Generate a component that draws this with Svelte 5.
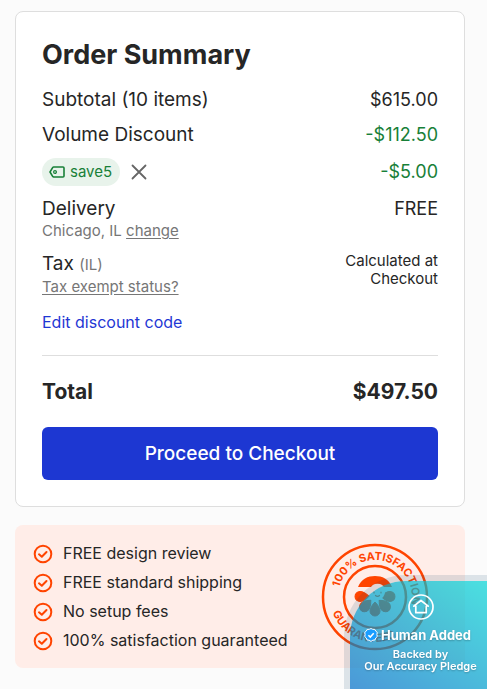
<script>
  // OrderSummary: cart totals, perks list and the floating pledge badge

  let discountCode = $state('save5');

  const perks = [
    'FREE design review',
    'FREE standard shipping',
    'No setup fees',
    '100% satisfaction guaranteed'
  ];

  // arms of the stamp's mascot, as rotation angles
  const petals = [-88, -44, 0, 44, 88];

  function removeCode() {
    discountCode = '';
  }
</script>

<main class="page">
  <section class="card">
    <h1>Order Summary</h1>

    <div class="rows">
      <div class="row">
        <span>Subtotal (10 items)</span>
        <span class="amount">$615.00</span>
      </div>
      <div class="row">
        <span>Volume Discount</span>
        <span class="amount saving">-$112.50</span>
      </div>
      {#if discountCode}
        <div class="row coupon">
          <div class="coupon-left">
            <span class="chip">
              <svg width="16" height="12" viewBox="0 0 16 12" fill="none" stroke="currentColor" stroke-width="1.6" stroke-linejoin="round">
                <path d="M4.6 1H14a1 1 0 0 1 1 1v8a1 1 0 0 1-1 1H4.6a1 1 0 0 1-.8-.4L1 6l2.8-4.6A1 1 0 0 1 4.6 1z" />
                <circle cx="6" cy="6" r="1.4" stroke-width="1.2" />
              </svg>
              {discountCode}
            </span>
            <button type="button" class="remove" aria-label="Remove discount code" onclick={removeCode}>
              <svg width="16" height="16" viewBox="0 0 16 16" fill="none" stroke="currentColor" stroke-width="1.8" stroke-linecap="round">
                <path d="M1.5 1.5l13 13M14.5 1.5l-13 13" />
              </svg>
            </button>
          </div>
          <span class="amount saving">-$5.00</span>
        </div>
      {/if}
      <div class="row">
        <div>
          <div>Delivery</div>
          <div class="note">Chicago, IL <a href="#change">change</a></div>
        </div>
        <span class="amount">FREE</span>
      </div>
      <div class="row">
        <div>
          <div>Tax <span class="region">(IL)</span></div>
          <div class="note"><a href="#exempt">Tax exempt status?</a></div>
        </div>
        <span class="pending">Calculated at Checkout</span>
      </div>
    </div>

    <a class="edit" href="#discount">Edit discount code</a>

    <div class="total">
      <span>Total</span>
      <span>$497.50</span>
    </div>

    <button type="button" class="checkout">Proceed to Checkout</button>
  </section>

  <section class="perks">
    <ul>
      {#each perks as perk}
        <li>
          <svg width="20" height="20" viewBox="0 0 20 20" fill="none" stroke="currentColor" stroke-width="2" stroke-linecap="round" stroke-linejoin="round">
            <circle cx="10" cy="10" r="8.3" />
            <path d="M6 10.3l2.8 2.5 4.7-4.8" />
          </svg>
          {perk}
        </li>
      {/each}
    </ul>

    <svg class="stamp" width="110" height="110" viewBox="-55 -55 110 110" fill="none">
      <defs>
        <path id="arc-top" d="M-37 0A37 37 0 0 1 37 0A37 37 0 0 1 -37 0" transform="rotate(15)" />
        <path id="arc-bottom" d="M-45 0A45 45 0 0 0 45 0A45 45 0 0 0 -45 0" transform="rotate(-20)" />
      </defs>
      <circle r="52" stroke="#ff4400" stroke-width="2.5" />
      <circle r="31" stroke="#ff4400" stroke-width="2.5" />
      <text><textPath href="#arc-top">100% SATISFACTION</textPath></text>
      <text><textPath href="#arc-bottom">GUARANTEED</textPath></text>
      <path d="M-17-10C-14-18-7-21 0-21S14-18 17-10z" fill="#ff4400" />
      {#each petals as angle}
        <path d="M0 6C-3 9-5 12-5 15A5 5 0 0 0 5 15C5 12 3 9 0 6z" transform="translate(0 -1) rotate({angle})" fill="#ff4400" stroke="#ff4400" stroke-width="1" stroke-linejoin="round" />
      {/each}
      <path d="M-5-8A8 8 0 0 1 10-8C11-2 7 3 2.500 3S-6-2-5-8z" fill="#ffede8" />
      <path d="M-1-5v1M6-5v1M.5-1.500a2.500 2 0 0 0 4 0" stroke="#ff4400" stroke-width="1.200" stroke-linecap="round" />
    </svg>
  </section>
</main>

<aside class="pledge">
  <svg width="26" height="26" viewBox="0 0 26 26" fill="none" stroke="currentColor" stroke-linejoin="round" stroke-linecap="round">
    <circle cx="13" cy="13" r="12" stroke-width="1.7" />
    <path d="M7.800 12v6.700h10.400V12M5.800 12.200L13 6.500l7.200 5.700" stroke-width="1.7" />
  </svg>
  <strong>
    <svg width="14" height="14" viewBox="0 0 14 14">
      <path d="M7 .6L8.800 1.300 10.800 1.400 11.700 3.100 13.300 4.400 12.900 6.400 13.300 8.500 11.800 9.900 11 11.900 8.900 12.200 7 13.400 5.100 12.200 3 11.900 2.200 9.900.7 8.500 1.100 6.400.7 4.400 2.300 3.100 3.200 1.400 5.200 1.300z" fill="#1a9dff" stroke="#fff" stroke-width="1" stroke-linejoin="round" />
      <path d="M4.400 7.200l1.900 1.900 3.400-3.900" fill="none" stroke="#fff" stroke-width="1.5" />
    </svg>
    Human Added
  </strong>
  <p>Backed by<br />Our Accuracy Pledge</p>
</aside>

<style>
  :global(body) {
    margin: 0;
    background: #fbfbfb;
  }
  .page {
    display: flex;
    flex-direction: column;
    gap: 18px;
    padding: 11px 22px 21px 15px;
    font-family: Inter, "Liberation Sans", sans-serif;
    font-size: 19px;
    line-height: 24px;
    color: #262626;
  }
  .card {
    padding: 26px;
    border: 1px solid #dedede;
    border-radius: 8px;
    background: #fff;
  }
  h1 {
    margin: 0 0 16px;
    font-size: 27px;
    line-height: 34px;
    font-weight: 700;
  }
  .rows {
    display: flex;
    flex-direction: column;
    gap: 11px;
  }
  .row,
  .total {
    display: flex;
    justify-content: space-between;
    align-items: flex-start;
  }
  .row.coupon {
    align-items: center;
  }
  .amount {
    font-size: 18px;
  }
  .saving {
    color: #188038;
  }
  .coupon-left {
    display: flex;
    align-items: center;
    gap: 11px;
  }
  .chip {
    display: flex;
    align-items: center;
    gap: 5px;
    height: 28px;
    padding: 0 8px 0 7px;
    border-radius: 14px;
    background: #e8f3eb;
    color: #188038;
    font-size: 15px;
  }
  .remove {
    display: flex;
    padding: 0;
    border: none;
    background: none;
    color: #666;
    cursor: pointer;
  }
  .note {
    font-size: 15px;
    line-height: 20px;
    color: #767676;
  }
  .note a {
    color: inherit;
    text-underline-offset: 2px;
  }
  .region {
    font-size: 15px;
    color: #767676;
  }
  .pending {
    width: 110px;
    font-size: 15px;
    line-height: 18px;
    text-align: right;
  }
  .edit {
    display: block;
    margin-top: 15px;
    font-size: 16px;
    line-height: 20px;
    color: #1f37d4;
    text-decoration: none;
  }
  .total {
    margin: 23px 0 20px;
    padding-top: 21px;
    border-top: 1px solid #dedede;
    font-size: 21px;
    line-height: 30px;
    font-weight: 700;
  }
  .checkout {
    width: 100%;
    padding: 14px;
    border: none;
    border-radius: 6px;
    background: #1d37d2;
    color: #fff;
    font: inherit;
    line-height: 25px;
    font-weight: 500;
    cursor: pointer;
  }
  .perks {
    display: flex;
    justify-content: space-between;
    align-items: center;
    padding: 14px 35px 13px 18px;
    border-radius: 8px;
    background: #ffede8;
  }
  .perks ul {
    margin: 0;
    padding: 0;
    list-style: none;
    font-size: 16px;
    line-height: 29px;
  }
  .perks li {
    display: flex;
    align-items: center;
    gap: 10px;
    white-space: nowrap;
  }
  .perks li svg {
    color: #ff4400;
  }
  .stamp {
    flex: none;
  }
  .stamp text {
    fill: #ff4400;
    font-size: 11px;
    font-weight: 700;
  }
  .pledge {
    position: fixed;
    right: 0;
    bottom: 0;
    display: flex;
    flex-direction: column;
    align-items: center;
    width: 133px;
    padding: 13px 0 17px 4px;
    border-radius: 56px 0 0 0;
    background: linear-gradient(35deg, rgba(0, 110, 200, 0.7), rgba(0, 212, 212, 0.7));
    box-shadow: 0 0 0 6px rgba(0, 60, 100, 0.12);
    color: #fff;
    font-family: Inter, "Liberation Sans", sans-serif;
    text-shadow: 0 1px 2px rgba(0, 0, 0, 0.25);
  }
  .pledge strong {
    display: flex;
    align-items: center;
    gap: 3px;
    margin: 6px 6px 4px 0;
    font-size: 13px;
    line-height: 18px;
    white-space: nowrap;
  }
  .pledge p {
    margin: 0;
    font-size: 11px;
    line-height: 12px;
    font-weight: 600;
    text-align: center;
    white-space: nowrap;
  }
</style>
